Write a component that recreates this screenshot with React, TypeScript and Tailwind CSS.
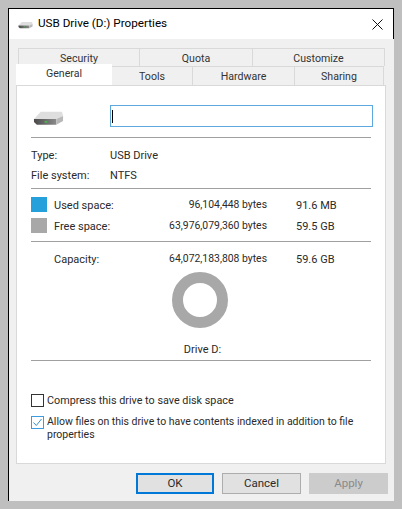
function DriveIcon({ className }: { className: string }) {
  return (
    <svg className={className} viewBox="0 0 32 16">
      <defs>
        <linearGradient id="driveFront" x1="0" y1="0" x2="1" y2="0">
          <stop offset="0" stopColor="#4a4a4a" />
          <stop offset="1" stopColor="#8a8a8a" />
        </linearGradient>
      </defs>
      <path d="M1 9 L8 1.5 H30 L31 6 L24 9 Z" fill="#dedede" />
      <path d="M1 9 H24 V15 H4 L1 12 Z" fill="url(#driveFront)" />
      <path d="M24 9 L31 6 V11 L24 15 Z" fill="#b8b8b8" />
      <rect x="12" y="11" width="3" height="2" fill="#4caf50" />
    </svg>
  );
}

function Divider() {
  return <div className="h-px bg-[#a0a0a0]" />;
}

function SpaceRow({ swatch, label, bytes, size }: { swatch?: string; label: string; bytes: string; size: string }) {
  return (
    <div className="flex items-center h-[21px]">
      <div className="w-[23px] shrink-0">
        {swatch && <div className={`w-[16px] h-[15px] ${swatch}`} />}
      </div>
      <span className="w-[70px] pt-px text-[11px]">{label}</span>
      <span className="w-[143px] pt-[2px] text-right text-[10.4px]">{bytes}</span>
      <span className="ml-[29px] pt-px text-[11px]">{size}</span>
    </div>
  );
}

function Tab({ label, width }: { label: string; width: string }) {
  return (
    <div className={`${width} h-full pt-[3px] flex items-center justify-center border-r border-[#d9d9d9] border-t bg-[#f0f0f0]`}>
      {label}
    </div>
  );
}

export default function App() {
  return (
    <div className="w-[402px] h-[509px] bg-[#bfbfbf] pt-[8px] pl-[8px] text-[10.6px] leading-none text-[#2a2a2a] font-['Roboto',sans-serif] overflow-hidden">
      <div className="w-[386px] h-[493px] border-l border-t border-black bg-[#f0f0f0] flex flex-col">
        {/* title bar */}
        <div className="h-[30px] shrink-0 bg-white border-r border-black flex items-center pl-[9px] pr-[10px]">
          <DriveIcon className="w-[15px] h-[8px] mt-[2px]" />
          <span className="ml-[5px] text-[11.7px] text-black">USB Drive (D:) Properties</span>
          <svg className="ml-auto w-[11px] h-[11px]" viewBox="0 0 11 11">
            <path d="M0.5 0.5 L10.5 10.5 M10.5 0.5 L0.5 10.5" stroke="#111" strokeWidth="1" fill="none" />
          </svg>
        </div>

        {/* tabs */}
        <div className="pl-[7px] pt-[9px]">
          <div className="flex h-[18px] ml-[2px] text-[#333]">
            <div className="border-l border-[#d9d9d9]" />
            <Tab label="Security" width="w-[121px]" />
            <Tab label="Quota" width="w-[113px]" />
            <Tab label="Customize" width="w-[132px]" />
          </div>
          <div className="flex h-[19px] items-end text-[#333]">
            <div className="w-[96px] h-[21px] -mt-[2px] pb-[1px] bg-white flex items-center justify-center relative">General</div>
            <Tab label="Tools" width="w-[81px]" />
            <Tab label="Hardware" width="w-[102px]" />
            <Tab label="Sharing" width="w-[89px]" />
          </div>
        </div>

        {/* panel */}
        <div className="ml-[7px] w-[370px] h-[379px] bg-white border border-[#d9d9d9] px-[14px] flex flex-col">
          <div className="flex items-center mt-[19px] h-[22px]">
            <DriveIcon className="w-[31px] h-[16px] shrink-0 ml-[2px] mt-[3px]" />
            <div className="ml-[46px] w-[263px] h-[22px] shrink-0 border border-[#5ea8e0] flex items-center pl-[1px]">
              <div className="w-px h-[13px] bg-black" />
            </div>
          </div>
          <div className="mt-[10px]"><Divider /></div>
          <div className="mt-[6px] flex items-center h-[20px] pt-[3px] text-[11px]">
            <span className="w-[79px]">Type:</span>
            <span>USB Drive</span>
          </div>
          <div className="flex items-center h-[20px] pt-[3px] text-[11px]">
            <span className="w-[79px]">File system:</span>
            <span>NTFS</span>
          </div>
          <div className="mt-[4px]"><Divider /></div>
          <div className="mt-[5px]">
            <SpaceRow swatch="bg-[#26a0da]" label="Used space:" bytes="96,104,448 bytes" size="91.6 MB" />
            <SpaceRow swatch="bg-[#a8a8a8]" label="Free space:" bytes="63,976,079,360 bytes" size="59.5 GB" />
          </div>
          <div className="mt-[5px]"><Divider /></div>
          <div className="mt-[6px]">
            <SpaceRow label="Capacity:" bytes="64,072,183,808 bytes" size="59.6 GB" />
          </div>
          <div className="mt-[3px] ml-[141px] w-[56px] h-[56px] rounded-full border-[11px] border-[#a8a8a8]" />
          <div className="mt-[16px] text-center ml-[3px] text-[11px]">Drive D:</div>
          <div className="mt-[5px]"><Divider /></div>

          <div className="mt-[33px] flex items-center gap-[3px]">
            <div className="w-[13px] h-[13px] border border-[#333]" />
            <span className="mt-[2px] text-[10.8px]">Compress this drive to save disk space</span>
          </div>
          <div className="mt-[8px] flex items-start gap-[3px]">
            <div className="w-[13px] h-[13px] shrink-0 border border-[#3d9be0] mt-px flex items-center justify-center">
              <svg className="w-[9px] h-[9px]" viewBox="0 0 9 9">
                <path d="M0.5 4.5 L3.3 7.5 L8.5 1" stroke="#3d8ed0" strokeWidth="1" fill="none" />
              </svg>
            </div>
            <span className="leading-[13px] w-[310px] text-[10.5px]">Allow files on this drive to have contents indexed in addition to file properties</span>
          </div>
        </div>

        {/* buttons */}
        <div className="flex ml-[127px] mt-[9px] gap-[8px] h-[21px] text-[11.5px]">
          <div className="w-[78px] h-full pt-px bg-[#e1e1e1] border-2 border-[#0078d7] flex items-center justify-center">OK</div>
          <div className="w-[79px] h-full pt-px bg-[#e1e1e1] border border-[#adadad] flex items-center justify-center">Cancel</div>
          <div className="w-[79px] h-full pt-px bg-[#cccccc] text-[#8a8a8a] flex items-center justify-center">Apply</div>
        </div>
      </div>
    </div>
  );
}
